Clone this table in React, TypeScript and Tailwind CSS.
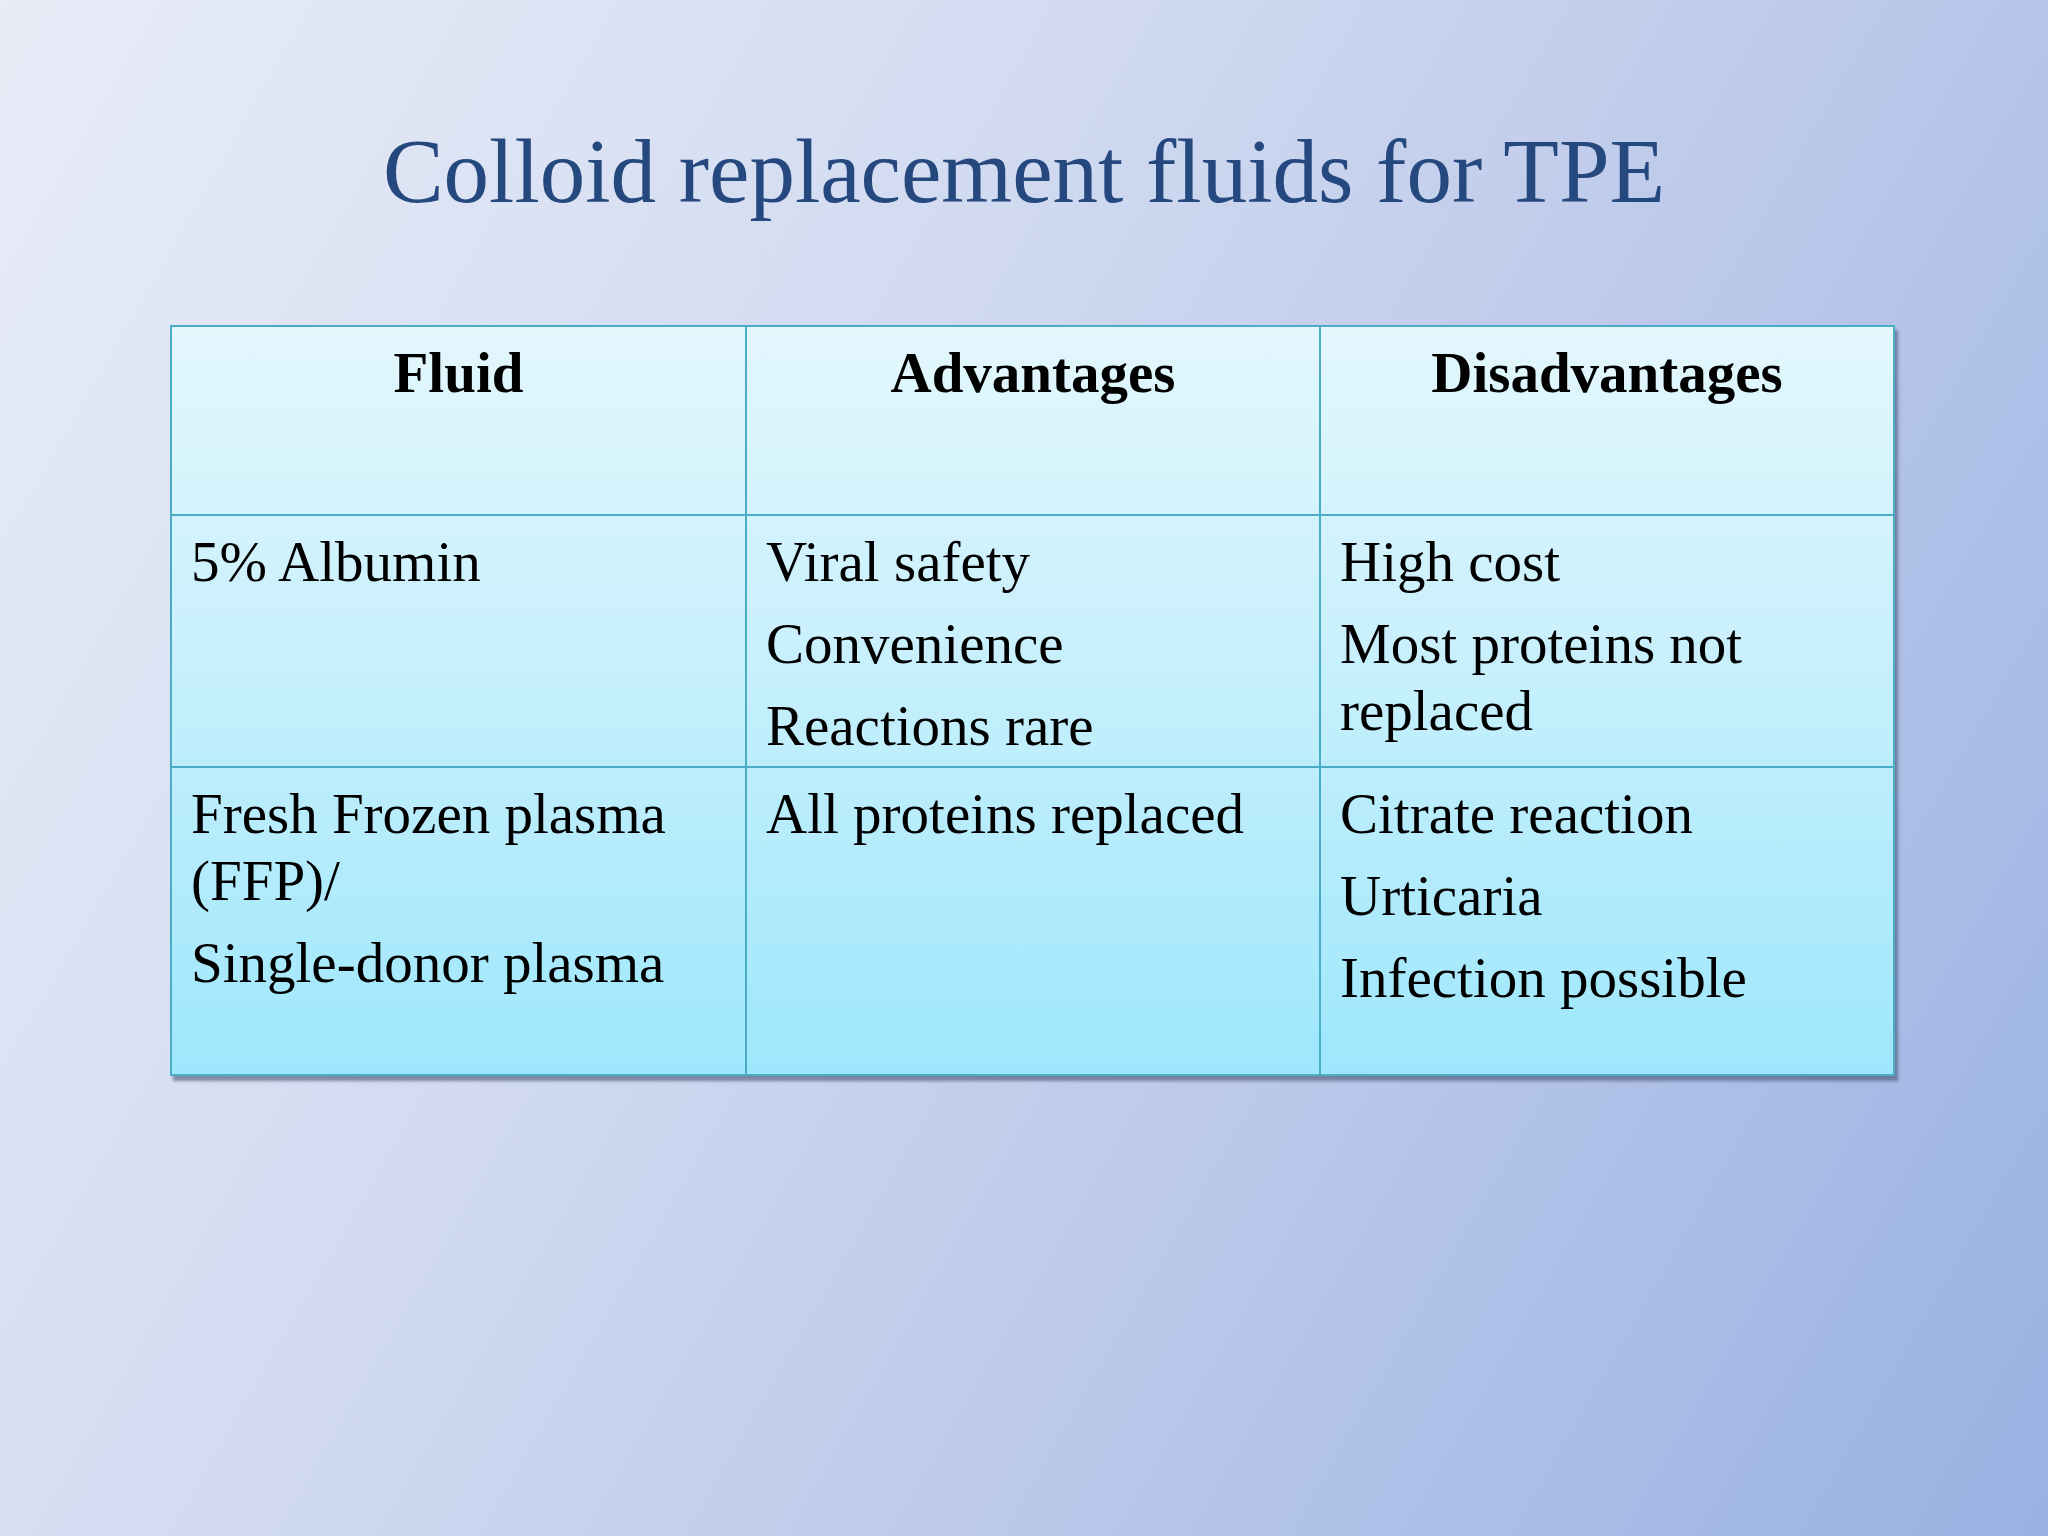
import React from "react";

const serif = { fontFamily: '"Liberation Serif", "Times New Roman", serif' };

function Cell({
  lines,
  header,
  lastCol,
  lastRow,
}: {
  lines: string[];
  header?: boolean;
  lastCol?: boolean;
  lastRow?: boolean;
}) {
  return (
    <div
      className={`pl-[19px] pr-[19px] pt-[12px] border-[#4bacc6] ${lastCol ? "" : "border-r-2"} ${
        lastRow ? "" : "border-b-2"
      } ${header ? "text-center font-bold" : "text-left"}`}
    >
      {lines.map((l, i) => (
        <p key={i} className={`text-[57px] leading-[67px] text-black ${i > 0 ? "mt-[15px]" : ""}`}>
          {l}
        </p>
      ))}
    </div>
  );
}

export default function App() {
  const rows: string[][][] = [
    [["Fluid"], ["Advantages"], ["Disadvantages"]],
    [
      ["5% Albumin"],
      ["Viral safety", "Convenience", "Reactions rare"],
      ["High cost", "Most proteins not replaced"],
    ],
    [
      ["Fresh Frozen plasma (FFP)/", "Single-donor plasma"],
      ["All proteins replaced"],
      ["Citrate reaction", "Urticaria", "Infection possible"],
    ],
  ];
  return (
    <div
      className="w-[2048px] h-[1536px] flex flex-col bg-[linear-gradient(120deg,#e8ecf7_0%,#d3dcf1_35%,#bfcbeb_60%,#98b2e2_100%)]"
      style={serif}
    >
      <h1 className="mt-[126px] text-center text-[91px] leading-none text-[#25497f] font-normal">
        Colloid replacement fluids for TPE
      </h1>
      <div className="ml-[170px] mt-[108px] w-[1725px] border-2 border-[#4bacc6] grid grid-cols-[575px_574px_572px] grid-rows-[189px_252px_306px] bg-[linear-gradient(to_bottom,#e3f7fd,#c4effc_50%,#9ee7fc)] shadow-[3px_5px_3px_rgba(70,80,110,0.6)]">
        {rows.map((row, ri) =>
          row.map((cell, ci) => (
            <Cell
              key={`${ri}-${ci}`}
              lines={cell}
              header={ri === 0}
              lastCol={ci === 2}
              lastRow={ri === 2}
            />
          ))
        )}
      </div>
    </div>
  );
}
